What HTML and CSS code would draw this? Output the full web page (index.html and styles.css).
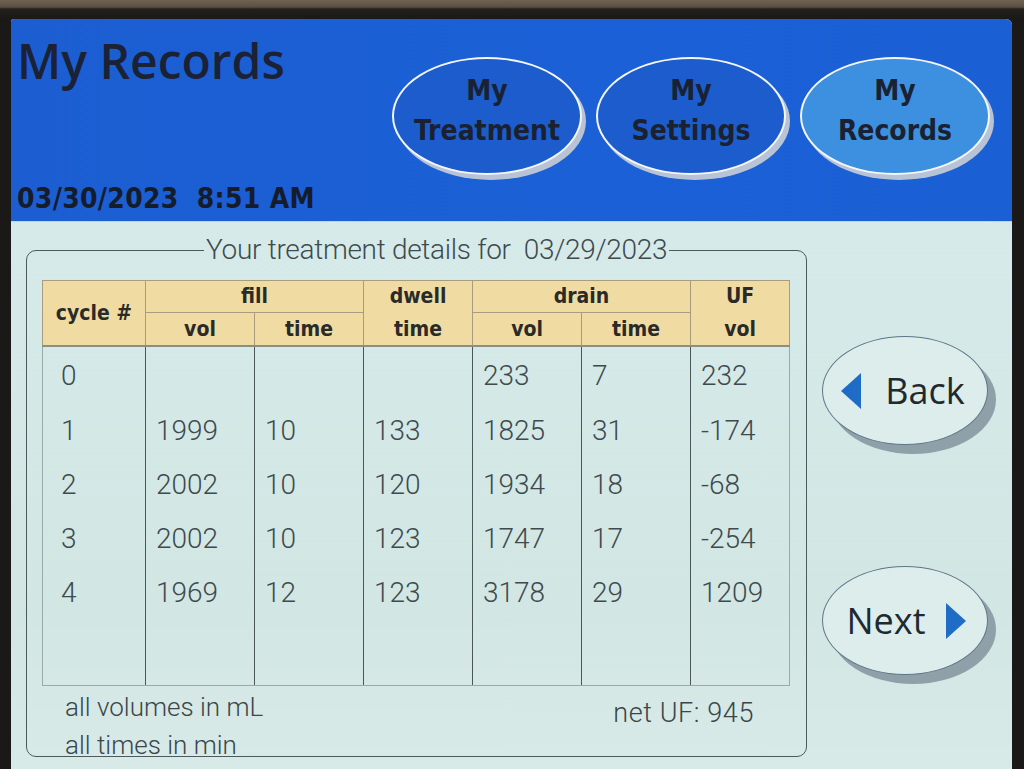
FILE: index.html
```html
<!DOCTYPE html>
<html>
<head>
<meta charset="utf-8">
<link rel="stylesheet" href="styles.css">
</head>
<body>
<div class="bezel">
  <div class="screen">
    <header class="header">
      <div class="head-left">
        <h1 class="title">My Records</h1>
        <div class="clock">03/30/2023&nbsp;&nbsp;8:51 AM</div>
      </div>
      <nav class="tabs">
        <div class="tab"><span>My</span><span>Treatment</span></div>
        <div class="tab"><span>My</span><span>Settings</span></div>
        <div class="tab tab-active"><span>My</span><span>Records</span></div>
      </nav>
    </header>
    <main class="content">
      <fieldset class="details">
        <legend class="legend">Your treatment details for&nbsp;&nbsp;03/29/2023</legend>
        <table class="records">
          <colgroup>
            <col class="c-cycle"><col class="c-w"><col class="c-w"><col class="c-w"><col class="c-w"><col class="c-w"><col class="c-uf">
          </colgroup>
          <thead>
            <tr class="h1">
              <th rowspan="2" class="h-cycle">cycle #</th>
              <th colspan="2">fill</th>
              <th class="h-top">dwell</th>
              <th colspan="2">drain</th>
              <th class="h-top">UF</th>
            </tr>
            <tr class="h2">
              <th>vol</th><th>time</th><th class="h-bot">time</th><th>vol</th><th>time</th><th class="h-bot">vol</th>
            </tr>
          </thead>
          <tbody>
            <tr class="first"><td class="cy">0</td><td></td><td></td><td></td><td>233</td><td>7</td><td>232</td></tr>
            <tr><td class="cy">1</td><td>1999</td><td>10</td><td>133</td><td>1825</td><td>31</td><td>-174</td></tr>
            <tr><td class="cy">2</td><td>2002</td><td>10</td><td>120</td><td>1934</td><td>18</td><td>-68</td></tr>
            <tr><td class="cy">3</td><td>2002</td><td>10</td><td>123</td><td>1747</td><td>17</td><td>-254</td></tr>
            <tr><td class="cy">4</td><td>1969</td><td>12</td><td>123</td><td>3178</td><td>29</td><td>1209</td></tr>
            <tr class="filler"><td></td><td></td><td></td><td></td><td></td><td></td><td></td></tr>
          </tbody>
        </table>
        <div class="notes">
          <div class="units">
            <div>all volumes in mL</div>
            <div>all times in min</div>
          </div>
          <div class="net">net UF: 945</div>
        </div>
      </fieldset>
      <aside class="nav-btns">
        <div class="pill pill-back">
          <svg class="tri" width="20" height="36" viewBox="0 0 20 36"><polygon points="20,0 20,36 0,18" fill="#1e6cc6"/></svg>
          <span>Back</span>
        </div>
        <div class="pill pill-next">
          <span>Next</span>
          <svg class="tri" width="20" height="36" viewBox="0 0 20 36"><polygon points="0,0 0,36 20,18" fill="#1e6cc6"/></svg>
        </div>
      </aside>
    </main>
  </div>
</div>
</body>
</html>
```
FILE: styles.css
```css
html, body {
  margin: 0;
  padding: 0;
  width: 1024px;
  height: 769px;
  overflow: hidden;
  background: #1d1b19;
}
.bezel {
  width: 1024px;
  height: 769px;
  box-sizing: border-box;
  padding: 19px 12px 0 11px;
  background: linear-gradient(to bottom, #6f6353 0, #5a4f43 7px, #221f1c 9px, #1a1917 20px);
}
.screen {
  width: 1001px;
  height: 750px;
  display: flex;
  flex-direction: column;
  background: #d4e9e7;
  border-radius: 3px 6px 0 0;
  overflow: hidden;
}
.header {
  height: 203px;
  flex: none;
  display: flex;
  justify-content: space-between;
  background: linear-gradient(to right, #1c5ed2, #1b60d6 60%, #1a5fd4);
  border-bottom: 1px solid #b9d6e6;
  box-sizing: border-box;
}
.head-left {
  display: flex;
  flex-direction: column;
  justify-content: space-between;
  padding: 12px 0 6px 6px;
}
.title {
  margin: 0;
  font-family: "Open Sans", "Noto Sans", sans-serif;
  font-weight: 600;
  font-size: 48px;
  line-height: 60px;
  color: #1b2236;
  letter-spacing: 0;
}
.clock {
  font-family: "DejaVu Sans Condensed", "DejaVu Sans", sans-serif;
  font-stretch: condensed;
  font-weight: bold;
  font-size: 28px;
  line-height: 32px;
  color: #151c2c;
  letter-spacing: 0.3px;
}
.tabs {
  display: flex;
  gap: 14px;
  padding: 38px 22px 0 0;
}
.tab {
  width: 190px;
  height: 118px;
  box-sizing: border-box;
  border: 2px solid #f3f6fa;
  border-radius: 50%;
  box-shadow: 4px 5px 0 0 #b9c3d6;
  background: #1c5ccd;
  display: flex;
  flex-direction: column;
  align-items: center;
  justify-content: center;
  padding-bottom: 10px;
  font-family: "DejaVu Sans Condensed", "DejaVu Sans", sans-serif;
  font-stretch: condensed;
  font-weight: bold;
  font-size: 28px;
  line-height: 40px;
  color: #1a2232;
}
.tab-active {
  background: #3d8fe0;
}
.content {
  flex: 1;
  display: flex;
  align-items: flex-start;
  background: linear-gradient(to bottom, #d6ebe9, #d2e6e4 70%, #d8eae8);
}
.details {
  margin: 13px 0 0 15px;
  width: 781px;
  height: 522px;
  box-sizing: border-box;
  border: 1.5px solid #4c5a5e;
  border-radius: 10px;
  padding: 0 14px 0 15px;
  display: flex;
  flex-direction: column;
}
.legend {
  margin-left: 162px;
  padding: 0 2px;
  font-family: "Roboto", "Liberation Sans", sans-serif;
  font-weight: 300;
  font-size: 28px;
  line-height: 30px;
  color: #3e4a4e;
  letter-spacing: -0.3px;
}
.records {
  margin-top: 15px;
  width: 748px;
  border-collapse: collapse;
  table-layout: fixed;
  border: 1px solid #9aaaa9;
}
.c-cycle { width: 103px; }
.c-w { width: 109px; }
.c-uf { width: 99px; }
.records th {
  background: #f0dca3;
  font-family: "DejaVu Sans Condensed", "DejaVu Sans", sans-serif;
  font-stretch: condensed;
  font-weight: bold;
  font-size: 21px;
  color: #2a2a28;
  border: 1px solid #a89c80;
  padding: 0;
  text-align: center;
}
.records .h1 th { height: 31px; line-height: 31px; }
.records .h2 th { height: 32px; line-height: 32px; }
.records .h-top { border-bottom: none; }
.records .h-bot { border-top: none; }
.records thead tr.h2 th { border-bottom: 2px solid #8b8e82; }
.records .h-cycle { border-bottom: 2px solid #8b8e82; }
.records td {
  height: 54px;
  padding: 0 0 0 10px;
  border-left: 1px solid #4a5658;
  border-right: 1px solid #4a5658;
  font-family: "Roboto", "Liberation Sans", sans-serif;
  font-weight: 300;
  font-size: 28px;
  color: #3e4a4e;
  vertical-align: middle;
}
.records td.cy { padding-left: 18px; }
.records td:first-child { border-left: none; }
.records td:last-child { border-right: none; }
.records tr.first td { height: 56px; }
.records tr.filler td { height: 66px; border-bottom: 1px solid #9aaaa9; }
.notes {
  display: flex;
  justify-content: space-between;
  padding: 2px 38px 0 23px;
  font-family: "Roboto", "Liberation Sans", sans-serif;
  font-weight: 300;
  font-size: 26px;
  color: #3a464a;
}
.units div { line-height: 38px; }
.net { padding-top: 6px; line-height: 38px; font-size: 27px; letter-spacing: 0.6px; }
.nav-btns {
  display: flex;
  flex-direction: column;
  gap: 121px;
  padding: 114px 0 0 15px;
}
.pill {
  width: 166px;
  height: 109px;
  box-sizing: border-box;
  border: 1.5px solid #5e7686;
  border-radius: 50%;
  background: #dcedec;
  box-shadow: 8px 9px 0 0 #8fa0a8;
  display: flex;
  align-items: center;
  justify-content: center;
  gap: 24px;
  font-family: "Open Sans", "Noto Sans", sans-serif;
  font-size: 36px;
  color: #1e2a30;
}
.pill-back { padding-right: 4px; }
.pill-next { gap: 20px; padding-left: 2px; }
.tri { display: block; }
```
